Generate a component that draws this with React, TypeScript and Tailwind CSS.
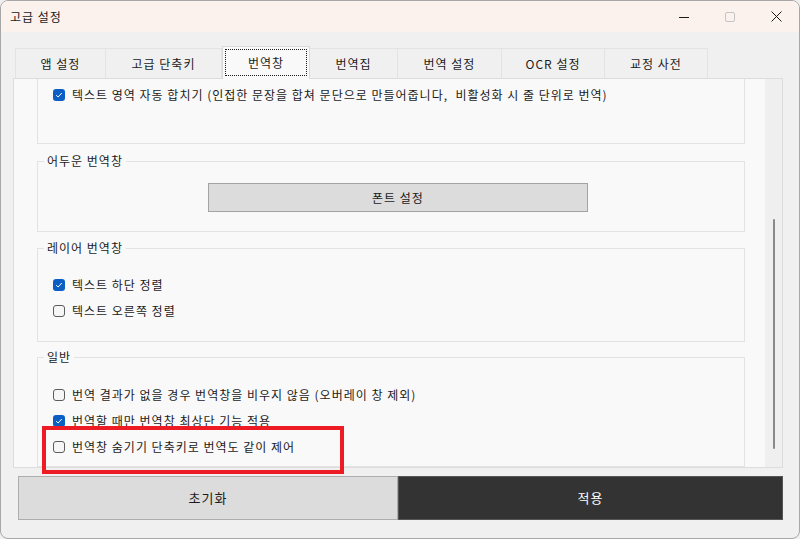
import React from 'react';

const font = { fontFamily: '"Noto Sans CJK KR", "Noto Sans", sans-serif' };

const tabs = [
  { label: '앱 설정', w: 'w-[91px]' },
  { label: '고급 단축키', w: 'w-[116px]' },
  { label: '번역창', w: 'w-[88px]', active: true },
  { label: '번역집', w: 'w-[88px]' },
  { label: '번역 설정', w: 'w-[104px]' },
  { label: 'OCR 설정', w: 'w-[103px]' },
  { label: '교정 사전', w: 'w-[103px]' },
];

function Check({ checked, label }: { checked?: boolean; label: string }) {
  return (
    <div className="flex items-center h-[20px] pl-[15px]">
      {checked ? (
        <span className="w-[12px] h-[12px] rounded-[3px] bg-[#0a5ec4] flex items-center justify-center">
          <svg width="8" height="8" viewBox="0 0 8 8">
            <path d="M1.2 4.2 L3.1 6 L6.8 2" fill="none" stroke="#fff" strokeWidth="1" />
          </svg>
        </span>
      ) : (
        <span className="w-[12px] h-[12px] rounded-[3px] border border-[#5c5c5c] bg-[#f6f6f6]" />
      )}
      <span className="ml-[7px] text-[12px] leading-[14px] text-[#1b1b1b] tracking-[1px] whitespace-pre">{label}</span>
    </div>
  );
}

function Group({ title, className, children }: { title?: string; className: string; children?: React.ReactNode }) {
  return (
    <div className={`relative border border-[#e3e3e3] ${className}`}>
      {title && (
        <span className="absolute left-[6px] top-[-9px] px-[3px] bg-[#f9f9f9] text-[12px] leading-[16px] text-[#1b1b1b] tracking-[1px]">
          {title}
        </span>
      )}
      {children}
    </div>
  );
}

export default function App() {
  return (
    <div style={font} className="w-[800px] h-[539px] bg-[#f0f0f0] overflow-hidden">
      <div className="relative w-[800px] h-[539px] rounded-[8px] border border-[#a7a7a7] bg-[#f0f0f0] flex flex-col overflow-hidden">
        {/* title bar */}
        <div className="h-[31px] shrink-0 bg-[#fbf2ee] flex items-center pl-[9px]">
          <span className="text-[12px] text-[#1b1b1b] tracking-[1px]">고급 설정</span>
          <div className="ml-auto flex items-center h-full">
            <div className="w-[46px] h-full flex items-center justify-center">
              <span className="block w-[10px] h-px bg-[#1b1b1b] mt-[1px]" />
            </div>
            <div className="w-[46px] h-full flex items-center justify-center">
              <span className="block w-[10px] h-[10px] rounded-[2px] border border-[#c4c4c4]" />
            </div>
            <div className="w-[46px] h-full flex items-center justify-center">
              <svg width="11" height="11" viewBox="0 0 11 11">
                <path d="M0.5 0.5 L10.5 10.5 M10.5 0.5 L0.5 10.5" stroke="#1b1b1b" strokeWidth="1" />
              </svg>
            </div>
          </div>
        </div>

        {/* tab strip */}
        <div className="pt-[13px] pl-[14px] flex items-end h-[46px] shrink-0">
          {tabs.map((t) =>
            t.active ? (
              <div
                key={t.label}
                className={`${t.w} h-[33px] -mb-px z-10 bg-[#f9f9f9] border border-b-0 border-[#dadada] p-[2px] pb-[3px]`}
              >
                <div className="h-full border border-dotted border-[#1b1b1b] flex items-center justify-center text-[12px] text-[#1b1b1b] tracking-[1px]">
                  {t.label}
                </div>
              </div>
            ) : (
              <div
                key={t.label}
                className={`${t.w} h-[30px] bg-[#f0f0f0] border border-b-0 border-l-0 first:border-l border-[#e3e3e3] flex items-center justify-center text-[12px] text-[#1b1b1b] tracking-[1px]`}
              >
                {t.label}
              </div>
            )
          )}
        </div>

        {/* tab page */}
        <div className="relative ml-[12px] mr-[16px] h-[390px] shrink-0 bg-[#f9f9f9] border border-[#dcdcdc] flex">
          <div className="flex-1 overflow-hidden pl-[23px] pr-[20px]">
            <Group className="h-[110px] -mt-[45px] border-t-0">
              <div className="pt-[51px]">
                <Check checked label="텍스트 영역 자동 합치기 (인접한 문장을 합쳐 문단으로 만들어줍니다,  비활성화 시 줄 단위로 번역)" />
              </div>
            </Group>
            <Group title="어두운 번역창" className="mt-[17px] h-[71px]">
              <div className="flex pl-[170px] pt-[21px]">
                <button className="w-[380px] h-[29px] bg-[#dcdcdc] border border-[#a3a3a3] text-[12px] text-[#1b1b1b] tracking-[1px]">
                  폰트 설정
                </button>
              </div>
            </Group>
            <Group title="레이어 번역창" className="mt-[16px] h-[94px]">
              <div className="pt-[26px] flex flex-col gap-[6px]">
                <Check checked label="텍스트 하단 정렬" />
                <Check label="텍스트 오른쪽 정렬" />
              </div>
            </Group>
            <Group title="일반" className="mt-[15px] h-[110px]">
              <div className="pt-[27px] flex flex-col gap-[6px]">
                <Check label="번역 결과가 없을 경우 번역창을 비우지 않음 (오버레이 창 제외)" />
                <Check checked label="번역할 때만 번역창 최상단 기능 적용" />
                <Check label="번역창 숨기기 단축키로 번역도 같이 제어" />
              </div>
            </Group>
          </div>
          {/* scrollbar */}
          <div className="w-[17px] bg-[#efefef] flex justify-center pt-[140px]">
            <span className="block w-[2px] h-[230px] rounded-full bg-[#8a8a8a]" />
          </div>
        </div>

        {/* buttons */}
        <div className="flex ml-[17px] mr-[16px] mt-[8px] h-[44px]">
          <button className="w-[380px] h-full bg-[#dcdcdc] border border-[#adadad] text-[13px] text-[#1b1b1b] tracking-[1px]">
            초기화
          </button>
          <button className="flex-1 h-full bg-[#333333] border border-[#555] text-[13px] text-white tracking-[1px]">
            적용
          </button>
        </div>

        {/* red highlight annotation */}
        <div className="absolute left-[41px] top-[425px] w-[302px] h-[48px] border-[4px] border-[#ed1c24]" />
      </div>
    </div>
  );
}
